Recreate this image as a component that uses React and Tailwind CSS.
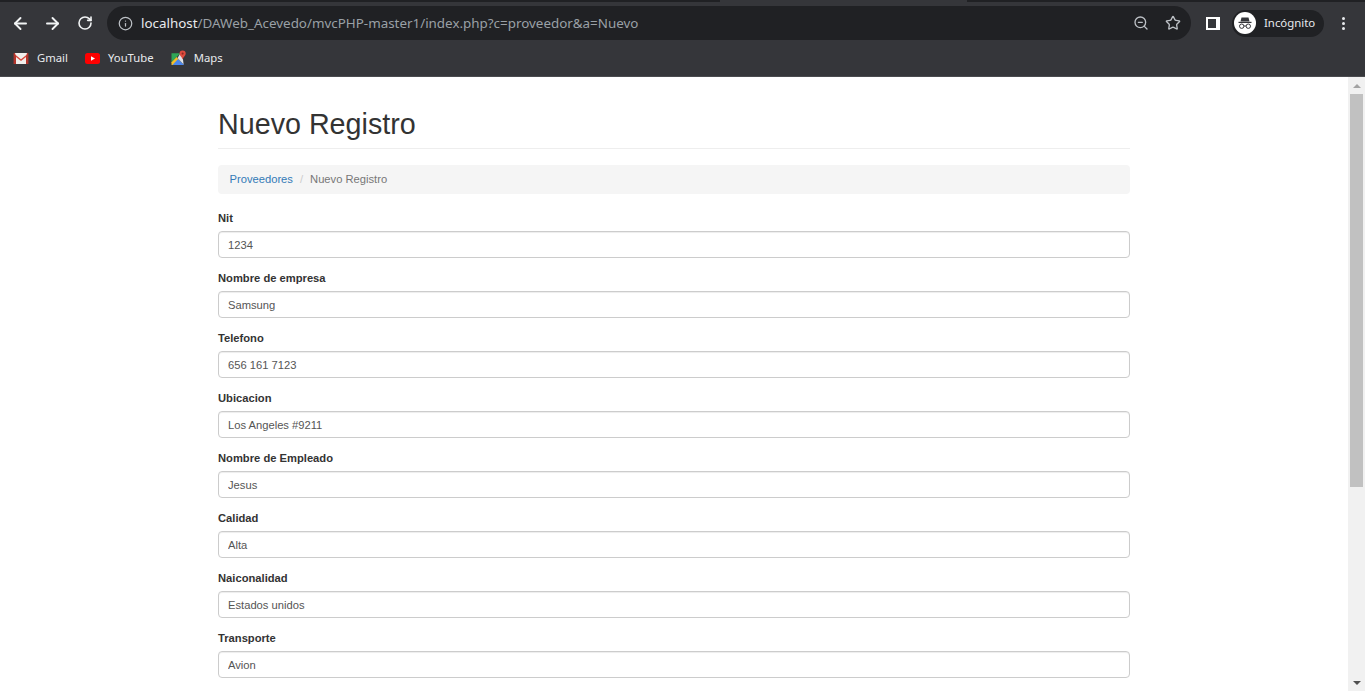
import React from 'react';
import { ArrowLeft, ArrowRight, RotateCw, Info, ZoomOut, Star } from 'lucide-react';

const fields = [
    { label: 'Nit', value: '1234' },
    { label: 'Nombre de empresa', value: 'Samsung' },
    { label: 'Telefono', value: '656 161 7123' },
    { label: 'Ubicacion', value: 'Los Angeles #9211' },
    { label: 'Nombre de Empleado', value: 'Jesus' },
    { label: 'Calidad', value: 'Alta' },
    { label: 'Naiconalidad', value: 'Estados unidos' },
    { label: 'Transporte', value: 'Avion' },
];

const GmailIcon = () => (
    <svg width="16" height="13" viewBox="0 0 16 13">
        <rect x="1" y="1" width="14" height="11" fill="#f1efec" />
        <path d="M0.8 12 V1.5 L8 7.2 L15.2 1.5 V12 H13 V5 L8 9 L3 5 V12 Z" fill="#d9473b" />
        <path d="M0.8 12 V1 H2 L3 5 V12 Z M15.2 12 V1 H14 L13 5 V12 Z" fill="#b3352c" />
    </svg>
);

const YoutubeIcon = () => (
    <svg width="15" height="11" viewBox="0 0 15 11">
        <rect width="15" height="11" rx="2.5" fill="#ff0000" />
        <path d="M6 3.2 L10 5.5 L6 7.8 Z" fill="#fff" />
    </svg>
);

const MapsIcon = () => (
    <svg width="15" height="16" viewBox="0 0 16 16">
        <path d="M0.5 3 H10 L0.5 12.5 Z" fill="#2fa656" />
        <path d="M0.5 12.5 L6 7 L13 15.5 H0.5 Z" fill="#f6c026" />
        <path d="M1.5 15.5 L7.5 9 L14 15.5 Z" fill="#4a86ee" />
        <path d="M7 8 L10 3 H12 L13.5 15 Z" fill="#dfe3e8" />
        <path d="M12.4 0 A3.3 3.3 0 0 1 15.7 3.3 C15.7 5.5 13.4 6.5 12.4 9.5 C11.4 6.5 9.1 5.5 9.1 3.3 A3.3 3.3 0 0 1 12.4 0 Z" fill="#dd4b3e" />
        <circle cx="12.4" cy="3.3" r="1.1" fill="#8f2a22" />
    </svg>
);

const IncognitoIcon = () => (
    <svg width="22" height="22" viewBox="0 0 22 22">
        <circle cx="11" cy="11" r="11" fill="#fff" />
        <path d="M7.5 5.5 H14.5 L15.5 9.5 H6.5 Z" fill="#35363a" />
        <rect x="4.5" y="9.8" width="13" height="1.2" fill="#35363a" />
        <circle cx="7.7" cy="14.2" r="2.2" fill="none" stroke="#35363a" strokeWidth="1" />
        <circle cx="14.3" cy="14.2" r="2.2" fill="none" stroke="#35363a" strokeWidth="1" />
        <path d="M9.9 14 H12.1" stroke="#35363a" strokeWidth="1" />
    </svg>
);

const Bookmark = ({ icon, label }) => (
    <div className="flex items-center gap-[8px] text-[11.3px] text-[#e8eaed]">
        {icon}
        <span>{label}</span>
    </div>
);

const BrowserChrome = () => (
    <div className="shrink-0 bg-[#35363a] border-b border-[#4a4b4f] font-['Noto_Sans',sans-serif]">
        {/* tab strip, just the bottom edge is left */}
        <div className="h-[2px] flex bg-[#202124]">
            <div className="w-[720px]" />
            <div className="w-[247px] bg-[#35363a]" />
        </div>
        <div className="h-[42px] flex items-center pl-[11px] pr-[12px]">
            <ArrowLeft className="w-[19px] h-[19px] text-[#f1f3f4]" strokeWidth={2.4} />
            <ArrowRight className="w-[19px] h-[19px] ml-[13px] text-[#f1f3f4]" strokeWidth={2.4} />
            <RotateCw className="w-[16px] h-[16px] ml-[15px] text-[#f1f3f4]" strokeWidth={2.4} />
            <div className="ml-[14px] w-[1084px] h-[34px] rounded-full bg-[#202124] flex items-center pl-[11px] pr-[10px]">
                <Info className="w-[15px] h-[15px] text-[#bdc1c6]" />
                <div className="ml-[8px] text-[13.4px] text-[#9aa0a6] flex-1 whitespace-nowrap">
                    <span className="text-[#e8eaed]">localhost</span>/DAWeb_Acevedo/mvcPHP-master1/index.php?c=proveedor&amp;a=Nuevo
                </div>
                <ZoomOut className="w-[16px] h-[16px] text-[#bdc1c6]" />
                <Star className="w-[16px] h-[16px] ml-[16px] text-[#bdc1c6]" />
            </div>
            <div className="ml-[15px] w-[14px] h-[13px] bg-white flex">
                <div className="ml-[2px] mt-[2px] w-[8px] h-[9px] bg-[#35363a]" />
            </div>
            <div className="ml-[12px] h-[27px] w-[92px] rounded-full bg-[#202124] flex items-center pl-[2px] gap-[8px]">
                <IncognitoIcon />
                <span className="text-[11.4px] text-[#e8eaed]">Incógnito</span>
            </div>
            <div className="ml-[18px] flex flex-col gap-[2px]">
                <div className="w-[3px] h-[3px] rounded-full bg-[#e8eaed]" />
                <div className="w-[3px] h-[3px] rounded-full bg-[#e8eaed]" />
                <div className="w-[3px] h-[3px] rounded-full bg-[#e8eaed]" />
            </div>
        </div>
        <div className="h-[28px] mb-[4px] flex items-center pl-[13px] gap-[17px]">
            <Bookmark icon={<GmailIcon />} label="Gmail" />
            <Bookmark icon={<YoutubeIcon />} label="YouTube" />
            <Bookmark icon={<MapsIcon />} label="Maps" />
        </div>
    </div>
);

const Scrollbar = () => (
    <div className="w-[17px] shrink-0 bg-[#f1f1f1] flex flex-col items-center">
        <div className="h-[17px] flex items-center justify-center">
            <div className="w-0 h-0 border-x-[4px] border-x-transparent border-b-[4px] border-b-[#a3a3a3]" />
        </div>
        <div className="w-[13px] h-[393px] bg-[#c1c1c1]" />
        <div className="flex-1" />
        <div className="h-[17px] flex items-center justify-center">
            <div className="w-0 h-0 border-x-[4px] border-x-transparent border-t-[4px] border-t-[#505050]" />
        </div>
    </div>
);

const Field = ({ label, value }) => (
    <div className="mb-[12px]">
        <label className="block font-bold text-[11.2px] leading-[16px] mb-[5px] text-[#333]">{label}</label>
        <input
            readOnly
            defaultValue={value}
            className="block w-full h-[27px] px-[9px] text-[11.2px] text-[#555] bg-white border border-[#ccc] rounded-[4px] shadow-[inset_0_1px_1px_rgba(0,0,0,0.075)] outline-none"
        />
    </div>
);

const App = () => (
    <div className="h-[691px] overflow-hidden flex flex-col bg-white font-['Liberation_Sans',Arial,sans-serif]">
        <BrowserChrome />
        <div className="flex-1 flex min-h-0">
            <div className="flex-1 overflow-hidden pl-[218px] pr-[218px]">
                <div className="pt-[30px] pb-[6px] border-b border-[#eee] mb-[16px]">
                    <h1 className="text-[28.7px] leading-[35px] text-[#333]">Nuevo Registro</h1>
                </div>
                <div className="h-[29px] mb-[16px] px-[11.5px] flex items-center gap-[7px] bg-[#f5f5f5] rounded-[4px] text-[11.2px]">
                    <span className="text-[#337ab7]">Proveedores</span>
                    <span className="text-[#ccc]">/</span>
                    <span className="text-[#777]">Nuevo Registro</span>
                </div>
                {fields.map(f => (
                    <Field key={f.label} label={f.label} value={f.value} />
                ))}
            </div>
            <Scrollbar />
        </div>
    </div>
);

export default App;
